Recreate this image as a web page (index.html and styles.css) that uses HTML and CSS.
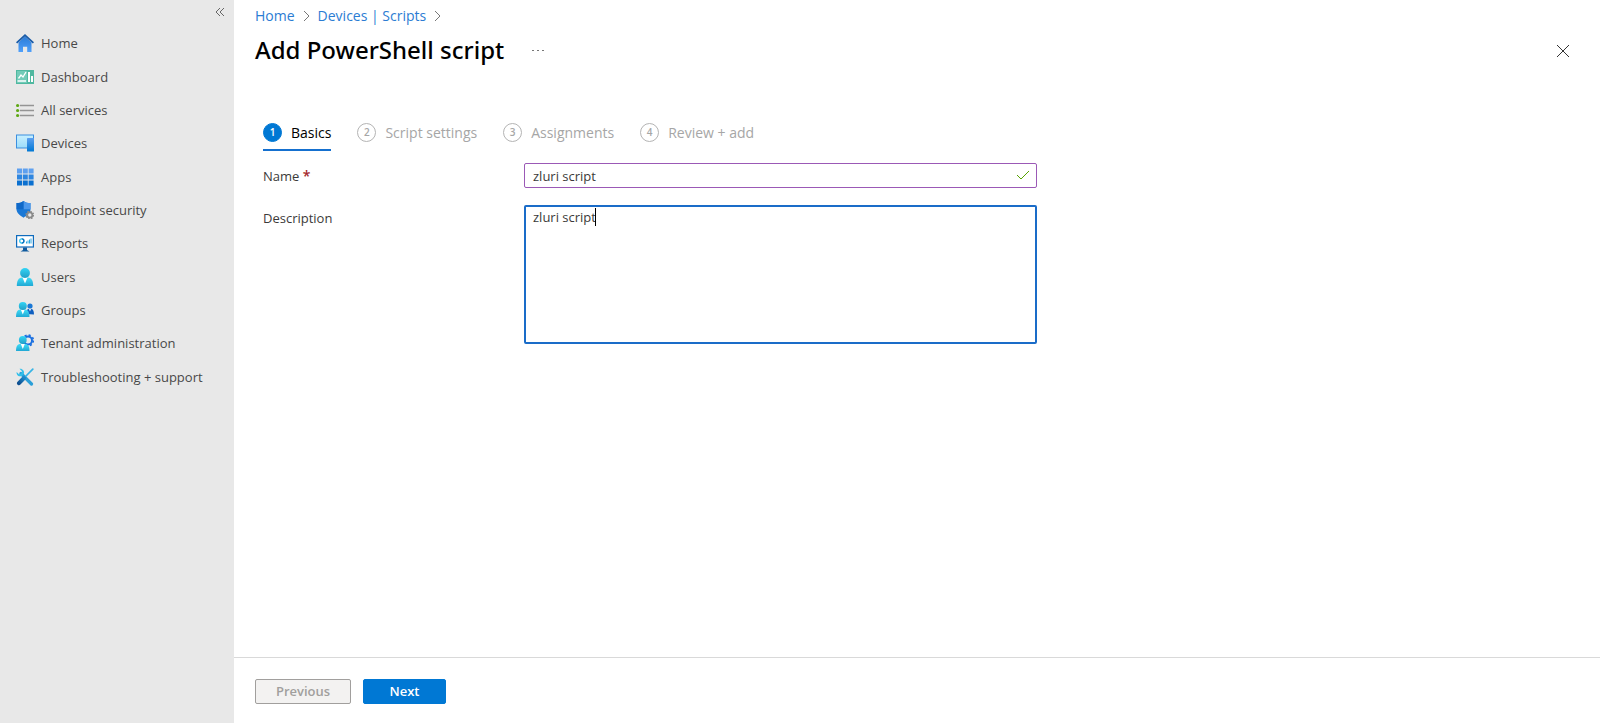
FILE: index.html
```html
<!DOCTYPE html>
<html lang="en">
<head>
  <meta charset="UTF-8">
  <title>Add PowerShell script</title>
  <meta name="viewport" content="width=device-width, initial-scale=1.0">
  <link rel="stylesheet" href="styles.css">
</head>
<body>
  <!-- shared gradients for the menu icons -->
  <svg class="defs" width="0" height="0" aria-hidden="true">
    <defs>
      <linearGradient id="blue" x1="0" y1="0" x2="0" y2="1"><stop offset="0" stop-color="#5ea0ef"/><stop offset="1" stop-color="#0078d4"/></linearGradient>
      <linearGradient id="house" x1="0" y1="0" x2="0" y2="1"><stop offset="0" stop-color="#2b7cd8"/><stop offset="1" stop-color="#50a0fa"/></linearGradient>
      <linearGradient id="cyan" x1="0" y1="0" x2="0" y2="1"><stop offset="0" stop-color="#32d4f5"/><stop offset="1" stop-color="#22a0c8"/></linearGradient>
      <linearGradient id="body" x1="0" y1="0" x2="0" y2="1"><stop offset="0" stop-color="#40dcf6"/><stop offset="1" stop-color="#20a8d4"/></linearGradient>
      <linearGradient id="tool" x1="1" y1="0" x2="0" y2="1"><stop offset="0" stop-color="#1c88c8"/><stop offset="1" stop-color="#0f4f90"/></linearGradient>
      <linearGradient id="screen" x1="0" y1="0" x2="0" y2="1"><stop offset="0" stop-color="#c8f0ff"/><stop offset="1" stop-color="#9cdcfa"/></linearGradient>
    </defs>
  </svg>

  <div class="portal">
    <nav class="sidebar" aria-label="Main menu">
      <button class="collapse-btn" aria-label="Collapse menu">
        <svg width="10" height="10" viewBox="0 0 10 10"><path d="M5 1 1 5l4 4M9 1 5 5l4 4"/></svg>
      </button>
      <ul class="menu">
        <li><a href="#">
          <svg class="icon" viewBox="0 0 18 18"><path fill="url(#house)" d="M2.500 8.500 9 2.500l6.500 6V18h-4.300v-5.200H7V18H2.500z"/><path fill="#1a5ca8" d="M9 0 0 8.300l1.200 1.300L9 2.600l7.800 7L18 8.300z"/></svg>
          Home</a></li>
        <li><a href="#">
          <svg class="icon" viewBox="0 0 18 18"><rect y="2" width="18" height="14" fill="#50b8a0"/><rect x="1" y="3" width="10" height="12" fill="#72cbb8"/><path fill="none" stroke="#fff" stroke-width="1.300" d="M2.500 10.500 5 7l2 2 3-5M1.500 13H10"/><path fill="#fff" d="M12 4h2v10h-2zM15 8h2v6h-2z"/></svg>
          Dashboard</a></li>
        <li><a href="#">
          <svg class="icon" viewBox="0 0 18 18"><path stroke="#949494" stroke-width="1.400" d="M4 4.500h14M4 9.500h14M4 14.500h14"/><circle cx="1.600" cy="4.500" r="1.600" fill="#5ea814"/><circle cx="1.600" cy="9.500" r="1.600" fill="#5ea814"/><circle cx="1.600" cy="14.500" r="1.600" fill="#5ea814"/></svg>
          All services</a></li>
        <li><a href="#">
          <svg class="icon" viewBox="0 0 18 18"><rect x=".5" y="1" width="17" height="13" fill="url(#screen)" stroke="#3b8fe0"/><rect x="11" y="4" width="7" height="13.500" rx=".6" fill="url(#blue)"/></svg>
          Devices</a></li>
        <li><a href="#">
          <svg class="icon" viewBox="0 0 18 18"><path fill="#5ea0ef" d="M1 .5h5v5H1zM6.800.5h5v5h-5zM12.600.5h5v5h-5z"/><path fill="#2f86e0" d="M1 6.500h5v5H1zM6.800 6.500h5v5h-5zM12.600 6.500h5v5h-5z"/><path fill="#0a70d0" d="M1 12.500h5v5H1zM6.800 12.500h5v5h-5zM12.600 12.500h5v5h-5z"/></svg>
          Apps</a></li>
        <li><a href="#">
          <svg class="icon" viewBox="0 0 18 18"><path fill="#1a78d6" d="M7.500 0c2 1.700 4.500 2 7 2.100v6c0 4-3.500 6.600-7 8.600C4 14.700.5 12.100.5 8.100v-6C3 2 5.500 1.700 7.500 0z"/><path fill="#4c98ec" d="M7.500 0v8.300h7V2.100C12 2 9.500 1.700 7.500 0z"/><path fill="#0f68c8" d="M7.500 0v8.300h-7V2.100C3 2 5.500 1.700 7.500 0z"/><circle cx="13.800" cy="14" r="2.600" fill="#e8e8e8" stroke="#8a8a8a" stroke-width="1.800"/><circle cx="13.800" cy="14" r="3.700" fill="none" stroke="#8a8a8a" stroke-width="1.400" stroke-dasharray="1.500 1.406"/></svg>
          Endpoint security</a></li>
        <li><a href="#">
          <svg class="icon" viewBox="0 0 18 18"><rect x=".6" y="1.600" width="16.800" height="11.400" fill="#fff" stroke="#0f6cbd" stroke-width="1.200"/><path fill="#0f5a9e" d="M7 13.500h4v2.500l2.500 1.500h-9L7 16z"/><circle cx="5.800" cy="7" r="2.100" fill="none" stroke="#32c8f0" stroke-width="1.300"/><path fill="none" stroke="#0f6cbd" stroke-width="1.300" d="M5.800 4.900a2.100 2.100 0 0 1 0 4.200"/><path stroke="#2ba6e0" d="M10.500 9.500V7.500M12 9.500v-3M13.500 9.500v-4M15 9.500v-5"/></svg>
          Reports</a></li>
        <li><a href="#">
          <svg class="icon" viewBox="0 0 18 18"><path fill="url(#body)" d="M.8 18c0-5 1.700-8.500 5.200-8.500h6c3.500 0 5.200 3.500 5.200 8.500z"/><path fill="#fff" d="m6.500 9.500 2.500 6 2.500-6z"/><circle cx="9" cy="5" r="4.900" fill="url(#cyan)"/></svg>
          Users</a></li>
        <li><a href="#">
          <svg class="icon" viewBox="0 0 18 18"><path fill="#0f5fc0" d="M10 13c0-3 1-5 2.800-5h2.400c1.800 0 2.800 2 2.800 5.500z"/><circle cx="14" cy="5" r="2.600" fill="#1a78d6"/><path fill="#fff" d="m13 8 1 2.500L15 8z"/><path fill="url(#body)" d="M0 16c0-4.500 1.400-7.500 4.300-7.500h4.900c2.900 0 4.300 3 4.300 7.500z"/><path fill="#fff" d="m4.800 8.500 2 5 2-5z"/><circle cx="6.800" cy="5" r="4" fill="url(#cyan)"/></svg>
          Groups</a></li>
        <li><a href="#">
          <svg class="icon" viewBox="0 0 18 18"><circle cx="12" cy="6.500" r="4" fill="none" stroke="#1a6fe0" stroke-width="2"/><circle cx="12" cy="6.500" r="5.400" fill="none" stroke="#1a6fe0" stroke-width="1.600" stroke-dasharray="2.100 2.141"/><path fill="url(#body)" d="M0 17c0-4.500 1.400-7 4.300-7h4.900c2.900 0 4.300 2.500 4.300 7z"/><path fill="#fff" d="m4.800 10 2 5 2-5z"/><circle cx="6.800" cy="6" r="3.900" fill="url(#cyan)"/></svg>
          Tenant administration</a></li>
        <li><a href="#">
          <svg class="icon" viewBox="0 0 18 18"><path fill="none" stroke="#2b9fd8" stroke-width="3.200" stroke-linecap="round" d="m5 5.500 10.500 10.500"/><path fill="#32c0ea" d="M3.500.8 6 3.300 5.300 5.600 3 6.200.7 3.900C.2 6 1.700 8.200 4 8.200c.8 0 1.500-.1 2-.5l2-2.200C8.700 2.900 6.200.2 3.500.8z"/><path stroke="#36b4e6" stroke-width="1.700" stroke-linecap="round" d="M16.800 1.200 9 9"/><path stroke="url(#tool)" stroke-width="4" stroke-linecap="round" d="m8 10-5 5.200"/></svg>
          Troubleshooting + support</a></li>
      </ul>
    </nav>

    <main class="blade">
      <header class="blade-header">
        <nav class="breadcrumb" aria-label="Breadcrumb">
          <a href="#">Home</a>
          <svg width="7" height="10" viewBox="0 0 7 10"><path d="m1 0 5 5-5 5"/></svg>
          <a href="#">Devices | Scripts</a>
          <svg width="7" height="10" viewBox="0 0 7 10"><path d="m1 0 5 5-5 5"/></svg>
        </nav>
        <div class="title-row">
          <h1>Add PowerShell script</h1>
          <button class="more-btn" aria-label="More actions">
            <svg width="12" height="2" viewBox="0 0 12 2"><path d="M0 0h2v1H0zM5 0h2v1H5zM10 0h2v1h-2z"/></svg>
          </button>
          <button class="close-btn" aria-label="Close">
            <svg width="14" height="14" viewBox="0 0 14 14"><path d="m1 1 12 12M13 1 1 13"/></svg>
          </button>
        </div>
      </header>

      <div class="content">
        <div class="tabs" role="tablist">
          <button class="tab active" role="tab" aria-selected="true"><span class="step">1</span>Basics</button>
          <button class="tab" role="tab"><span class="step">2</span>Script settings</button>
          <button class="tab" role="tab"><span class="step">3</span>Assignments</button>
          <button class="tab" role="tab"><span class="step">4</span>Review + add</button>
        </div>

        <form class="form" id="script-form">
          <label for="name">Name <span class="required">*</span></label>
          <div class="field">
            <input type="text" id="name" value="zluri script">
            <svg class="valid" width="14" height="10" viewBox="0 0 14 10"><path d="m1 5 4 4 8-8"/></svg>
          </div>
          <label for="description">Description</label>
          <div class="field">
            <textarea id="description">zluri script</textarea>
            <span class="caret"></span>
          </div>
        </form>
      </div>

      <footer class="actions">
        <button class="btn" disabled>Previous</button>
        <button class="btn primary" type="submit" form="script-form">Next</button>
      </footer>
    </main>
  </div>
</body>
</html>
```
FILE: styles.css
```css
* { box-sizing: border-box; }
body {
  margin: 0;
  background: #fff;
  color: #3b3a39;
  font-family: 'Segoe UI', 'Open Sans', sans-serif;
  font-size: 13px;
  line-height: 20px;
}
button, input, textarea { font: inherit; }
button { cursor: pointer; }
a { text-decoration: none; }
.defs { position: absolute; }
.portal {
  display: flex;
  min-height: 100vh;
}

/* sidebar */
.sidebar {
  display: flex;
  flex-direction: column;
  flex: 0 0 234px;
  background: #e8e8e8;
}
.collapse-btn {
  align-self: flex-end;
  display: flex;
  margin-right: 9px;
  padding: 7px 0 9px;
  border: none;
  background: none;
}
.collapse-btn svg { fill: none; stroke: #666; }
.menu {
  display: grid;
  grid-auto-rows: 34px 33px 33px;
  margin: 0;
  padding: 0;
  list-style: none;
}
.menu a {
  display: flex;
  align-items: center;
  gap: 7px;
  height: 33px;
  padding-left: 16px;
  color: #484848;
  white-space: nowrap;
}
.menu a:hover { background: #dcdcdc; }
.icon { width: 18px; height: 18px; }

/* blade */
.blade {
  flex: 1;
  display: flex;
  flex-direction: column;
  min-width: 0;
}
.blade-header { padding: 6px 30px 0 21px; }
.breadcrumb {
  display: flex;
  align-items: center;
  gap: 8px;
  font-size: 14px;
}
.breadcrumb a { color: #2b7cd3; }
.breadcrumb svg { fill: none; stroke: #777; }
.title-row {
  display: flex;
  align-items: center;
  padding-top: 6px;
}
h1 {
  margin: 0;
  color: #000;
  font-family: 'Segoe UI', 'Noto Sans', sans-serif;
  font-size: 24px;
  font-weight: 500;
  line-height: 36px;
}
.more-btn, .close-btn {
  display: flex;
  padding: 2px 0 0;
  border: none;
  background: none;
}
.more-btn { margin-left: 28px; }
.more-btn svg { fill: #777; }
.close-btn { margin-left: auto; }
.close-btn svg { fill: none; stroke: #333; }

.content {
  flex: 1;
  padding: 45px 29px 24px;
}
.tabs {
  display: flex;
  gap: 26px;
}
.tab {
  display: flex;
  align-items: center;
  gap: 9px;
  height: 38px;
  padding: 4px 0 0;
  border: none;
  border-bottom: 2px solid transparent;
  background: none;
  color: #a6a6a6;
  font-size: 14px;
}
.tab.active {
  border-bottom-color: #1570cf;
  color: #000;
}
.step {
  width: 19px;
  height: 19px;
  margin-bottom: 2px;
  border: 1px solid #b4b4b4;
  border-radius: 50%;
  font-size: 10px;
  font-weight: 600;
  line-height: 17px;
}
.active .step {
  border-color: #0078d4;
  background: #0078d4;
  color: #fff;
}

.form {
  display: grid;
  grid-template-columns: 261px minmax(200px, 513px);
  row-gap: 17px;
  padding-top: 12px;
}
.form label { padding-top: 3px; }
.required {
  color: #a4262c;
  font-size: 14px;
  font-weight: 600;
  line-height: 16px;
}
.field {
  position: relative;
  display: flex;
}
.field input, .field textarea {
  width: 100%;
  padding: 0 8px;
  border: 1px solid #9b59b6;
  border-radius: 2px;
  background: #fff;
  color: #3b3a39;
  outline: none;
}
.field input { height: 25px; }
.field textarea {
  height: 139px;
  padding: 0 7px;
  border: 2px solid #1a6cc8;
  resize: none;
}
.valid {
  position: absolute;
  top: 7px;
  right: 7px;
  fill: none;
  stroke: #57a300;
}
/* text cursor after the description */
.caret {
  position: absolute;
  top: 3px;
  left: 71px;
  width: 1px;
  height: 18px;
  background: #000;
}

.actions {
  display: flex;
  gap: 12px;
  padding: 21px 21px 19px;
  border-top: 1px solid #d9d9d9;
}
.btn {
  width: 96px;
  height: 25px;
  padding: 0;
  border: 1px solid #a19f9d;
  border-radius: 2px;
  background: #f3f2f1;
  color: #a19f9d;
  font-weight: 600;
  line-height: 23px;
}
.btn.primary {
  width: 83px;
  border-color: #0078d4;
  background: #0078d4;
  color: #fff;
}
```
